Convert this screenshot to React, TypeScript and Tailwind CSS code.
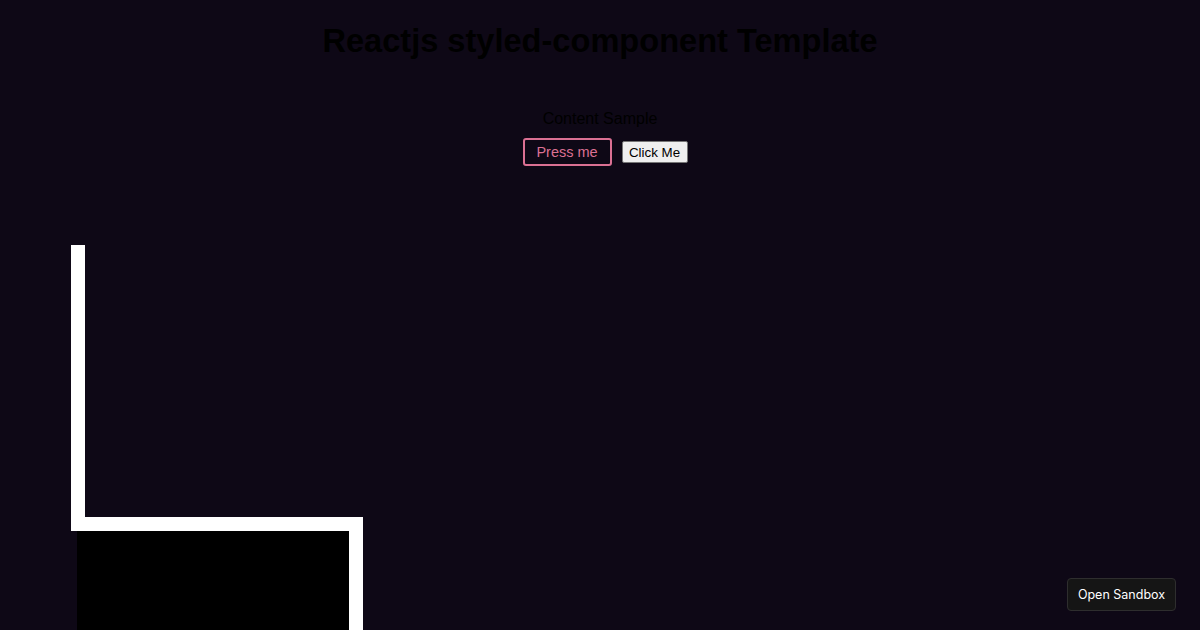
export default function App() {
  return (
    <div className="relative h-[630px] w-[1200px] overflow-hidden bg-[#0e0816] font-['Liberation_Sans',Arial,sans-serif] text-black">
      <h1 className="mb-[21px] mt-[22px] text-center text-[32.6px] font-bold leading-[37px]">
        Reactjs styled-component Template
      </h1>

      <div className="mt-[51px] flex flex-col items-center">
        <div className="text-[16px] leading-[18px]">Content Sample</div>
        <div className="mt-[10px] flex items-center pl-[10px]">
          <button
            type="button"
            className="h-[28px] w-[89px] rounded-[3px] border-2 border-[#db7093] pt-[2px] text-[14.5px] text-[#db7093]"
          >
            Press me
          </button>
          <button
            type="button"
            className="ml-[10px] h-[22px] w-[66px] rounded-[2px] border border-[#767676] bg-[#efefef] pt-[1px] text-[13.33px] text-black"
          >
            Click Me
          </button>
        </div>
      </div>

      {/* the two bordered boxes drawn at the lower left */}
      <div className="absolute left-[71px] top-[245px] h-[286px] w-[292px] border-b-[14px] border-l-[14px] border-white" />
      <div className="absolute left-[77px] top-[517px] h-[130px] w-[286px] border-r-[14px] border-t-[14px] border-white bg-black" />

      <button
        type="button"
        className="absolute left-[1067px] top-[578px] h-[33px] w-[109px] rounded-[4px] border border-[#2e2e2e] bg-[#151515] pt-[1px] font-['Inter',sans-serif] text-[12.5px] text-white"
      >
        Open Sandbox
      </button>
    </div>
  );
}
